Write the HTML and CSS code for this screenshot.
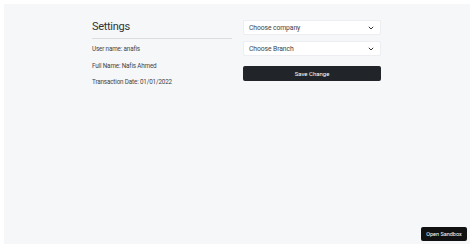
FILE: index.html
```html
<!DOCTYPE html>
<html lang="en">
<head>
  <meta charset="UTF-8" />
  <meta name="viewport" content="width=device-width, initial-scale=1.0"/>
  <title>Settings</title>
  <link rel="stylesheet" href="styles.css">
</head>
<body>
  <div class="page">
    <div class="settings">
      <div class="info">
        <h2>Settings</h2>
        <p>User name: anafis</p>
        <p>Full Name: Nafis Ahmed</p>
        <p>Transaction Date: 01/01/2022</p>
      </div>
      <div class="form">
        <div class="select">
          <span>Choose company</span>
          <svg width="6" height="4" viewBox="0 0 6 4"><path d="M0.8 0.8 L3 3 L5.2 0.8" fill="none" stroke="#333" stroke-width="1"/></svg>
        </div>
        <div class="select">
          <span>Choose Branch</span>
          <svg width="6" height="4" viewBox="0 0 6 4"><path d="M0.8 0.8 L3 3 L5.2 0.8" fill="none" stroke="#333" stroke-width="1"/></svg>
        </div>
        <button class="btn">Save Change</button>
      </div>
    </div>
    <button class="sandbox">Open Sandbox</button>
  </div>
</body>
</html>
```
FILE: styles.css
```css
body { margin: 0; background: #fff; font-family: Roboto, "Liberation Sans", sans-serif; }
.page { margin: 4px; height: 240px; background: #f6f7f9; position: relative; }
.settings { display: flex; gap: 11px; padding: 16px 0 0 88px; }
.info { width: 140px; }
.info h2 { font-weight: 400; font-size: 11px; letter-spacing: -0.3px; line-height: 14px; color: #333; margin: 0; padding: 0 0 4px; border-bottom: 1px solid #dcdde0; }
.info p { font-size: 6.3px; letter-spacing: -0.15px; color: #444; margin: 0; line-height: 8px; padding-top: 8.5px; }
.info h2 + p { padding-top: 6px; }
.form { width: 138px; display: flex; flex-direction: column; gap: 6px; }
.select { height: 15px; background: #fff; border: 1px solid #eceef1; border-radius: 2px; box-sizing: border-box; display: flex; align-items: center; justify-content: space-between; padding: 0 6px 0 5px; font-size: 6.8px; letter-spacing: -0.1px; color: #444; }
.btn { margin-top: 4px; height: 15px; background: #212529; color: #fff; border: none; border-radius: 2px; font-family: inherit; font-size: 6px; padding: 0; }
.sandbox { position: absolute; right: 3px; bottom: 3px; height: 14px; width: 46px; background: #111; color: #fff; border: none; border-radius: 2px; font-family: inherit; font-size: 5.5px; padding: 0; }
```
